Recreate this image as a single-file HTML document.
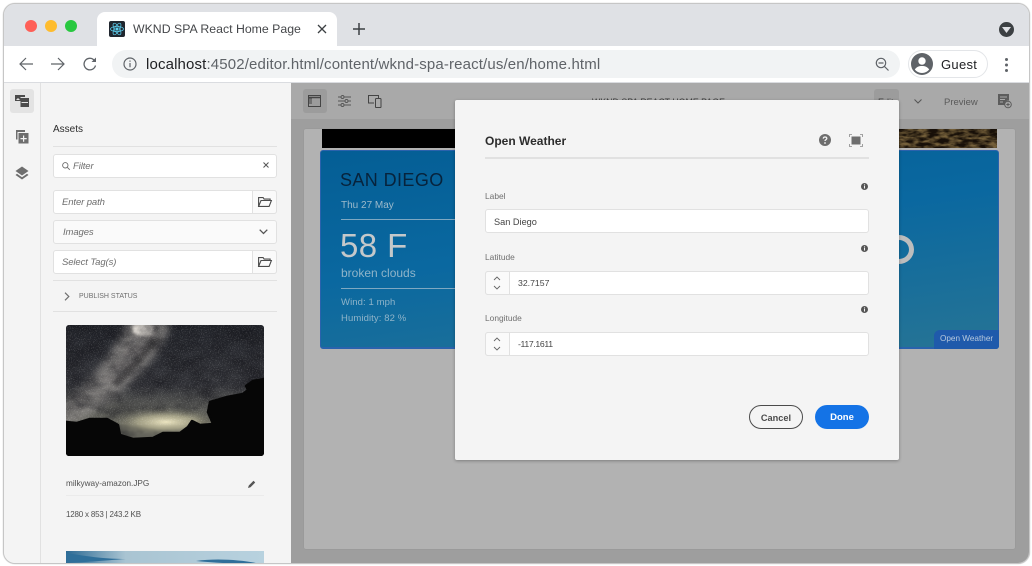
<!DOCTYPE html>
<html><head><meta charset="utf-8"><title>WKND SPA React Home Page</title>
<style>
html,body{margin:0;padding:0;width:1032px;height:566px;overflow:hidden;background:#fff}
body{position:relative;font-family:"Liberation Sans",sans-serif}
.a{position:absolute}
.t{position:absolute;white-space:nowrap}
.inp{position:absolute;background:#fff;border:1px solid #e1e1e1;border-radius:3px;box-sizing:border-box}
.it{font-style:italic;font-size:9.500px;color:#6e6e6e;letter-spacing:-.1px}
svg{position:absolute;overflow:visible}
.lab{font-size:8.400px;color:#707070}
.val{font-size:9.200px;color:#444}
.info{width:7px;height:7px}
</style></head><body>
<div id="win" class="a" style="left:3px;top:3px;width:1027px;height:561px;border-radius:12px;border:1px solid #c6c6c6;box-sizing:border-box;overflow:hidden;background:#f4f4f4;box-shadow:0 0 1px #bbb">
<div class="a" style="left:-4px;top:-4px;width:1032px;height:566px">

<!-- tab strip -->
<div class="a" style="left:0;top:0;width:1032px;height:46px;background:#dfe1e5"></div>
<div class="a" style="left:25px;top:20px;width:12px;height:12px;border-radius:50%;background:#fe5f57"></div>
<div class="a" style="left:45px;top:20px;width:12px;height:12px;border-radius:50%;background:#febc2e"></div>
<div class="a" style="left:65px;top:20px;width:12px;height:12px;border-radius:50%;background:#28c840"></div>
<div class="a" style="left:97px;top:12px;width:240px;height:34px;background:#fff;border-radius:8px 8px 0 0"></div>
<div class="a" style="left:109px;top:21px;width:16px;height:16px;background:#20262e;border-radius:2px"></div>
<svg style="left:109px;top:21px" width="16" height="16" viewBox="0 0 16 16" fill="none" stroke="#5ed3f3" stroke-width=".7"><ellipse cx="8" cy="8" rx="6.500" ry="2.600"/><ellipse cx="8" cy="8" rx="6.500" ry="2.600" transform="rotate(60 8 8)"/><ellipse cx="8" cy="8" rx="6.500" ry="2.600" transform="rotate(120 8 8)"/><circle cx="8" cy="8" r="1.200" fill="#5ed3f3"/></svg>
<div class="t" style="left:133px;top:22px;font-size:12.300px;color:#45474a">WKND SPA React Home Page</div>
<svg style="left:317px;top:24px" width="10" height="10" viewBox="0 0 10 10" stroke="#3c4043" stroke-width="1.300"><path d="M1 1 9 9M9 1 1 9"/></svg>
<svg style="left:353px;top:23px" width="12" height="12" viewBox="0 0 12 12" stroke="#3c4043" stroke-width="1.500"><path d="M6 0v12M0 6h12"/></svg>
<div class="a" style="left:999px;top:22px;width:15px;height:15px;border-radius:50%;background:#3c4043"></div>
<svg style="left:1002px;top:27px" width="9" height="6" viewBox="0 0 9 6" fill="#dfe1e5"><path d="M0 0h9L4.500 6z"/></svg>

<!-- toolbar -->
<div class="a" style="left:0;top:46px;width:1032px;height:36px;background:#fff"></div>
<div class="a" style="left:0;top:82px;width:1032px;height:1px;background:#dadce0"></div>
<svg style="left:19px;top:57px" width="14" height="14" viewBox="0 0 14 14" fill="none" stroke="#5f6368" stroke-width="1.200"><path d="M14 7H1M7 1 1 7l6 6"/></svg>
<svg style="left:51px;top:57px" width="14" height="14" viewBox="0 0 14 14" fill="none" stroke="#5f6368" stroke-width="1.200"><path d="M0 7h13M7 1l6 6-6 6"/></svg>
<svg style="left:83px;top:57px" width="14" height="14" viewBox="0 0 14 14" fill="none" stroke="#5f6368" stroke-width="1.300"><path d="M12.500 8.500A5.800 5.800 0 1 1 11 3"/><path d="M13 .5V5H8.500" fill="#5f6368" stroke="none"/></svg>
<div class="a" style="left:112px;top:50px;width:788px;height:28px;background:#f1f3f4;border-radius:14px"></div>
<svg style="left:123px;top:57px" width="14" height="14" viewBox="0 0 14 14" fill="none" stroke="#5f6368" stroke-width="1.200"><circle cx="7" cy="7" r="6"/><path d="M7 6v4.200M7 3.500v1.300"/></svg>
<div class="t" style="left:146px;top:55.500px;font-size:15px;color:#5f6368;letter-spacing:.14px"><span style="color:#202124">localhost</span>:4502/editor.html/content/wknd-spa-react/us/en/home.html</div>
<svg style="left:875px;top:57px" width="14" height="14" viewBox="0 0 14 14" fill="none" stroke="#5f6368" stroke-width="1.200"><circle cx="6" cy="6" r="4.700"/><path d="M9.500 9.500 13.500 13.500M3.500 6h5"/></svg>
<div class="a" style="left:908px;top:50px;width:80px;height:28px;border:1px solid #e3e5e8;border-radius:14px;box-sizing:border-box;background:#fff"></div>
<svg style="left:911px;top:53px" width="22" height="22" viewBox="0 0 22 22"><circle cx="11" cy="11" r="11" fill="#5f6368"/><circle cx="11" cy="8" r="3.700" fill="#fff"/><path d="M3.800 16.500C5.500 13.800 8 13 11 13s5.500.8 7.200 3.500A9.500 9.500 0 0 1 11 20a9.500 9.500 0 0 1-7.200-3.500z" fill="#fff"/></svg>
<div class="t" style="left:941px;top:57px;font-size:13px;color:#202124;letter-spacing:.3px">Guest</div>
<div class="a" style="left:1005px;top:58px;width:3px;height:3px;border-radius:50%;background:#5f6368;box-shadow:0 5.500px 0 #5f6368,0 11px 0 #5f6368"></div>

<!-- left rail + panel -->
<div class="a" style="left:0;top:83px;width:291px;height:483px;background:#f4f4f4"></div>
<div class="a" style="left:40px;top:83px;width:1px;height:483px;background:#e1e1e1"></div>
<div class="a" style="left:10px;top:89px;width:24px;height:24px;background:#e3e3e3;border-radius:3px"></div>
<svg style="left:15px;top:94px" width="14" height="14" viewBox="0 0 14 14" fill="#4b4b4b"><path d="M0 1h10v2H5.500v4H0z"/><path d="M5.500 4h8.500v9H5.500z"/><path d="M6.500 8h6.500v1H6.500z" fill="#e3e3e3"/><path d="M1 6l2-2 2 2z" fill="#e3e3e3"/></svg>
<svg style="left:15px;top:130px" width="14" height="14" viewBox="0 0 14 14" fill="#6e6e6e"><path d="M1 0h9v2H2.500v7.500H1z"/><path d="M3.500 3h10v10.500h-10z"/><path d="M8 5.500h1.200V8h2.500v1.200H9.200v2.500H8V9.200H5.500V8H8z" fill="#f4f4f4"/></svg>
<svg style="left:15px;top:166px" width="14" height="14" viewBox="0 0 14 14" fill="#6e6e6e"><path d="M7 .5 13.500 5 7 9.500.5 5z"/><path d="M2 7.800 7 11.200l5-3.400 1.500 1.200L7 13.500.5 9z"/></svg>

<div class="t" style="left:53px;top:123.500px;font-size:10px;color:#2c2c2c">Assets</div>
<div class="a" style="left:53px;top:146px;width:224px;height:1px;background:#e1e1e1"></div>
<div class="inp" style="left:53px;top:154px;width:224px;height:24px"></div>
<svg style="left:62px;top:162px" width="8" height="8" viewBox="0 0 8 8" fill="none" stroke="#6e6e6e" stroke-width=".9"><circle cx="3.300" cy="3.300" r="2.700"/><path d="M5.300 5.300 7.800 7.800"/></svg>
<div class="t it" style="left:73px;top:161px">Filter</div>
<svg style="left:263px;top:162px" width="6" height="6" viewBox="0 0 6 6" stroke="#555" stroke-width="1"><path d="M.5.500l5 5M5.500.500l-5 5"/></svg>

<div class="inp" style="left:53px;top:190px;width:224px;height:24px"></div>
<div class="a" style="left:252px;top:190px;width:25px;height:24px;border:1px solid #e1e1e1;box-sizing:border-box;border-radius:0 3px 3px 0;background:#fafafa"></div>
<div class="t it" style="left:62px;top:197px">Enter path</div>
<svg style="left:258px;top:197px" width="14" height="10" viewBox="0 0 14 10" fill="none" stroke="#4b4b4b" stroke-width="1.100"><path d="M.6 9.400V.6h4.500l1 1.500h6v1.400M.6 9.400h10.500l2.300-5.900H3z"/></svg>

<div class="inp" style="left:53px;top:220px;width:224px;height:24px;background:#fafafa"></div>
<div class="t it" style="left:63px;top:227px">Images</div>
<svg style="left:259px;top:229px" width="9" height="6" viewBox="0 0 9 6" fill="none" stroke="#555" stroke-width="1.300"><path d="M.7.700 4.500 4.500 8.300.7"/></svg>

<div class="inp" style="left:53px;top:250px;width:224px;height:24px"></div>
<div class="a" style="left:252px;top:250px;width:25px;height:24px;border:1px solid #e1e1e1;box-sizing:border-box;border-radius:0 3px 3px 0;background:#fafafa"></div>
<div class="t it" style="left:62px;top:257px">Select Tag(s)</div>
<svg style="left:258px;top:257px" width="14" height="10" viewBox="0 0 14 10" fill="none" stroke="#4b4b4b" stroke-width="1.100"><path d="M.6 9.400V.6h4.500l1 1.500h6v1.400M.6 9.400h10.500l2.300-5.900H3z"/></svg>

<div class="a" style="left:53px;top:280px;width:224px;height:1px;background:#e1e1e1"></div>
<svg style="left:64px;top:292px" width="6" height="9" viewBox="0 0 6 9" fill="none" stroke="#6e6e6e" stroke-width="1.200"><path d="M1 .7 4.800 4.500 1 8.300"/></svg>
<div class="t" style="left:79px;top:293px;font-size:7px;color:#6e6e6e">PUBLISH STATUS</div>
<div class="a" style="left:53px;top:311px;width:224px;height:1px;background:#e1e1e1"></div>

<!-- milky way image -->
<svg style="left:66px;top:325px;border-radius:3px" width="198" height="131" viewBox="0 0 198 131">
<defs>
<linearGradient id="sky" x1="0" y1="0" x2="0" y2="1"><stop offset="0" stop-color="#212329"/><stop offset=".45" stop-color="#34353a"/><stop offset=".68" stop-color="#5e5e58"/><stop offset="1" stop-color="#6a695e"/></linearGradient>
<radialGradient id="glow" cx=".5" cy=".5" r=".5"><stop offset="0" stop-color="#ece5c0"/><stop offset=".45" stop-color="#b5b192" stop-opacity=".8"/><stop offset="1" stop-color="#6a6a60" stop-opacity="0"/></radialGradient>
<filter id="b3" color-interpolation-filters="sRGB"><feGaussianBlur stdDeviation="4"/></filter>
<filter id="b1" color-interpolation-filters="sRGB"><feGaussianBlur stdDeviation="1.500"/></filter>
<filter id="cloud" x="0" y="0" width="100%" height="100%" color-interpolation-filters="sRGB"><feTurbulence type="fractalNoise" baseFrequency=".04 .06" numOctaves="4" seed="7"/><feColorMatrix values="0 0 0 0 .08  0 0 0 0 .08  0 0 0 0 .1  2.400 0 0 0 -.85"/></filter>
<filter id="grain" x="0" y="0" width="100%" height="100%" color-interpolation-filters="sRGB"><feTurbulence type="fractalNoise" baseFrequency=".9" numOctaves="2" seed="3"/><feColorMatrix values="0 0 0 0 1  0 0 0 0 1  0 0 0 0 1  3.500 0 0 0 -1.800"/></filter>
<clipPath id="c"><rect width="198" height="131" rx="3"/></clipPath>
</defs>
<g clip-path="url(#c)">
<rect width="198" height="131" fill="url(#sky)"/>
<path d="M-10 85C20 62 48 30 62 -5H105C100 25 70 55 40 78 25 90 10 98 -10 108z" fill="#8b8885" opacity=".8" filter="url(#b3)"/>
<ellipse cx="77" cy="4" rx="11" ry="7" fill="#e2ddd6" filter="url(#b1)"/>
<rect width="198" height="131" filter="url(#cloud)" opacity=".55"/>
<path d="M85 12C75 30 58 45 45 58L52 62C66 48 80 34 95 14z" fill="#2b2a2c" opacity=".55" filter="url(#b1)"/>
<ellipse cx="100" cy="97" rx="62" ry="15" fill="url(#glow)"/>
<rect width="198" height="100" filter="url(#grain)" opacity=".18"/>
<polygon points="0,97 11,98 24,94 41,94 52,100 54,110 67,114 87,113 97,108 114,108 122,102 126,96 134,100 147,99 142,87 144,77 161,72 177,69 182,65 180,61 187,56 198,54 198,131 0,131" fill="#060606" stroke="#060606" stroke-width="2.500" stroke-linejoin="round"/>
</g></svg>
<div class="t" style="left:66px;top:479px;font-size:8.200px;color:#505050">milkyway-amazon.JPG</div>
<svg style="left:248px;top:480px" width="8" height="8" viewBox="0 0 8 8" fill="#555"><path d="M0 8 .8 5.500 5.500.8 7.200 2.500 2.500 7.200z"/></svg>
<div class="a" style="left:66px;top:495px;width:198px;height:1px;background:#ebebeb"></div>
<div class="t" style="left:66px;top:509.500px;font-size:8px;color:#505050;letter-spacing:-.2px">1280 x 853 | 243.2 KB</div>
<svg style="left:66px;top:551px;border-radius:3px 3px 0 0" width="198" height="15" viewBox="0 0 198 15"><defs><linearGradient id="s2" x1="0" y1="0" x2="1" y2="0"><stop offset="0" stop-color="#2d6a94"/><stop offset=".3" stop-color="#a9c4d2"/><stop offset="1" stop-color="#b8d2df"/></linearGradient></defs><rect width="198" height="15" fill="url(#s2)"/><path d="M0 2C25 6 40 8 60 8 30 10 15 12 0 11zM130 10C150 7 175 9 190 12 170 13 150 12 130 10z" fill="#2f6f9a"/></svg>

<!-- editor area (dimmed) -->
<div class="a" style="left:291px;top:83px;width:741px;height:483px;background:#9e9e9e"></div>
<div class="a" style="left:291px;top:83px;width:741px;height:36px;background:#a9a9a9"></div>
<div class="a" style="left:303px;top:89px;width:24px;height:24px;background:#9c9c9c;border-radius:3px"></div>
<svg style="left:308px;top:95px" width="13" height="12" viewBox="0 0 13 12" fill="none" stroke="#444"><rect x=".5" y=".5" width="12" height="11"/><path d="M.5 2.500h12" stroke-width="1.400"/><path d="M1 4h3M1 6h3M1 8h3" stroke-width="1"/></svg>
<svg style="left:338px;top:95px" width="13" height="12" viewBox="0 0 13 12" fill="none" stroke="#555" stroke-width=".9"><path d="M0 2h3M6 2h7M0 6h7M10 6h3M0 10h3M6 10h7"/><circle cx="4.500" cy="2" r="1.500"/><circle cx="8.500" cy="6" r="1.500"/><circle cx="4.500" cy="10" r="1.500"/></svg>
<svg style="left:368px;top:95px" width="14" height="13" viewBox="0 0 14 13" fill="none" stroke="#444" stroke-width="1"><path d="M6 8H.5V.5h10V3"/><rect x="7.500" y="3.500" width="5.500" height="9" rx=".8"/></svg>
<div class="t" style="left:592px;top:96.500px;font-size:8.800px;color:#3a3a3a">WKND SPA REACT HOME PAGE</div>
<div class="a" style="left:874px;top:89px;width:25px;height:24px;background:#9c9c9c;border-radius:3px"></div>
<div class="t" style="left:878px;top:97px;font-size:9px;color:#444">Edit</div>
<svg style="left:914px;top:99px" width="8" height="5" viewBox="0 0 8 5" fill="none" stroke="#555" stroke-width="1"><path d="M.5.500 4 4 7.500.5"/></svg>
<div class="t" style="left:944px;top:96.500px;font-size:9.500px;color:#5a5a5a">Preview</div>
<svg style="left:998px;top:94px" width="14" height="14" viewBox="0 0 14 14"><path d="M0 0h11v6.500A4 4 0 0 0 6.500 11H0z" fill="#5c5c5c"/><path d="M2 3h7M2 5.500h5M2 8h3" stroke="#a9a9a9"/><circle cx="10" cy="10.500" r="3.300" fill="none" stroke="#5c5c5c" stroke-width="1"/><path d="M10 8.800v3.400M8.300 10.500h3.400" stroke="#5c5c5c"/></svg>

<div class="a" style="left:304px;top:129px;width:711px;height:420px;background:#b2b2b2;border-radius:2px;box-shadow:0 0 1px #8a8a8a"></div>
<div class="a" style="left:322px;top:129px;width:135px;height:19px;background:#000"></div>
<svg style="left:899px;top:129px" width="98" height="19" viewBox="0 0 98 19"><defs><filter id="rock" x="0" y="0" width="100%" height="100%" color-interpolation-filters="sRGB"><feTurbulence type="fractalNoise" baseFrequency=".1 .28" numOctaves="3" seed="4"/><feColorMatrix values="0 0 0 0 .09  0 0 0 0 .06  0 0 0 0 .03  2.400 0 0 0 -.6"/></filter></defs><rect width="98" height="19" fill="#75603a"/><rect width="98" height="19" filter="url(#rock)"/></svg>

<div class="a" style="left:320px;top:150px;width:679px;height:199px;border:1px solid #2a62ad;border-bottom-width:2px;border-radius:3px;box-sizing:border-box;background:linear-gradient(172deg,#045e95 0%,#0a68a0 45%,#267495 100%);overflow:hidden"></div>
<div class="t" style="left:340px;top:170px;font-size:18px;font-weight:normal;color:#07233c;letter-spacing:.4px">SAN DIEGO</div>
<div class="t" style="left:341px;top:200px;font-size:10px;color:#9dbacb">Thu 27 May</div>
<div class="a" style="left:341px;top:219px;width:120px;height:1px;background:#7ea8c2"></div>
<div class="t" style="left:340px;top:227px;font-size:33px;color:#c4c8ca;letter-spacing:.4px">58 F</div>
<div class="t" style="left:341px;top:266px;font-size:12px;color:#8fb4c9">broken clouds</div>
<div class="a" style="left:341px;top:288px;width:120px;height:1px;background:#7ea8c2"></div>
<div class="t" style="left:341px;top:297px;font-size:9.500px;color:#8fb4c9;letter-spacing:.1px">Wind: 1 mph</div>
<div class="t" style="left:341px;top:313px;font-size:9.500px;color:#8fb4c9;letter-spacing:.1px">Humidity: 82 %</div>
<div class="a" style="left:884px;top:235px;width:30px;height:29px;border:5px solid #bdbdbd;border-radius:50%;box-sizing:border-box"></div>
<div class="a" style="left:934px;top:330px;width:65px;height:19px;background:#1f5aab;border-radius:6px 0 3px 0"></div>
<div class="t" style="left:940px;top:334px;font-size:8.200px;color:#b8c9dd">Open Weather</div>

<!-- dialog -->
<div class="a" style="left:455px;top:100px;width:444px;height:360px;background:#f4f4f4;border-radius:2px;box-shadow:0 1px 3px rgba(0,0,0,.3)"></div>
<div class="t" style="left:485px;top:134px;font-size:12px;font-weight:bold;color:#2c2c2c">Open Weather</div>
<svg style="left:819px;top:134px" width="12" height="12" viewBox="0 0 12 12"><circle cx="6" cy="6" r="6" fill="#6e6e6e"/><path d="M4.300 4.600C4.300 3.500 5 3 6 3s1.800.5 1.800 1.500C7.800 5.800 6 5.600 6 7" fill="none" stroke="#f4f4f4" stroke-width="1.300"/><circle cx="6" cy="9" r=".9" fill="#f4f4f4"/></svg>
<svg style="left:849px;top:134px" width="14" height="13" viewBox="0 0 14 13" fill="none" stroke="#8a8a8a" stroke-width=".8"><path d="M.5 3V.5H3M11 .5h2.500V3M.5 10v2.500H3M11 12.500h2.500V10"/><rect x="2.500" y="2.500" width="9" height="8" fill="#6e6e6e" stroke="none"/></svg>
<div class="a" style="left:485px;top:157px;width:384px;height:2px;background:#e1e1e1"></div>

<div class="t lab" style="left:485px;top:191px">Label</div>
<svg class="info" style="left:861px;top:183px" viewBox="0 0 8 8"><circle cx="4" cy="4" r="4" fill="#555"/><path d="M3.400 3.300h1.200v3H3.400zM3.400 1.500h1.200v1.200H3.400z" fill="#f4f4f4"/></svg>
<div class="inp" style="left:485px;top:209px;width:384px;height:24px"></div>
<div class="t val" style="left:494px;top:217px">San Diego</div>

<div class="t lab" style="left:485px;top:252px">Latitude</div>
<svg class="info" style="left:861px;top:245px" viewBox="0 0 8 8"><circle cx="4" cy="4" r="4" fill="#555"/><path d="M3.400 3.300h1.200v3H3.400zM3.400 1.500h1.200v1.200H3.400z" fill="#f4f4f4"/></svg>
<div class="inp" style="left:485px;top:271px;width:384px;height:24px"></div>
<div class="a" style="left:485px;top:271px;width:25px;height:24px;border:1px solid #e1e1e1;box-sizing:border-box;border-radius:3px 0 0 3px;background:#fafafa"></div>
<svg style="left:493px;top:276px" width="8" height="14" viewBox="0 0 8 14" fill="none" stroke="#666" stroke-width=".9"><path d="M1 4 4 1l3 3M1 10l3 3 3-3"/></svg>
<div class="t val" style="left:518px;top:278px;font-size:8.700px">32.7157</div>

<div class="t lab" style="left:485px;top:313px">Longitude</div>
<svg class="info" style="left:861px;top:306px" viewBox="0 0 8 8"><circle cx="4" cy="4" r="4" fill="#555"/><path d="M3.400 3.300h1.200v3H3.400zM3.400 1.500h1.200v1.200H3.400z" fill="#f4f4f4"/></svg>
<div class="inp" style="left:485px;top:332px;width:384px;height:24px"></div>
<div class="a" style="left:485px;top:332px;width:25px;height:24px;border:1px solid #e1e1e1;box-sizing:border-box;border-radius:3px 0 0 3px;background:#fafafa"></div>
<svg style="left:493px;top:337px" width="8" height="14" viewBox="0 0 8 14" fill="none" stroke="#666" stroke-width=".9"><path d="M1 4 4 1l3 3M1 10l3 3 3-3"/></svg>
<div class="t val" style="left:518px;top:339px;font-size:8.700px;letter-spacing:-.35px">-117.1611</div>

<div class="a" style="left:749px;top:405px;width:54px;height:24px;border:1px solid #4b4b4b;border-radius:12px;box-sizing:border-box;text-align:center;font-size:9.200px;font-weight:bold;line-height:24px;color:#4b4b4b">Cancel</div>
<div class="a" style="left:815px;top:405px;width:54px;height:24px;background:#1473e6;border-radius:12px;text-align:center;font-size:9.500px;font-weight:bold;line-height:26px;color:#fff">Done</div>
</div>
</div>
</body></html>
